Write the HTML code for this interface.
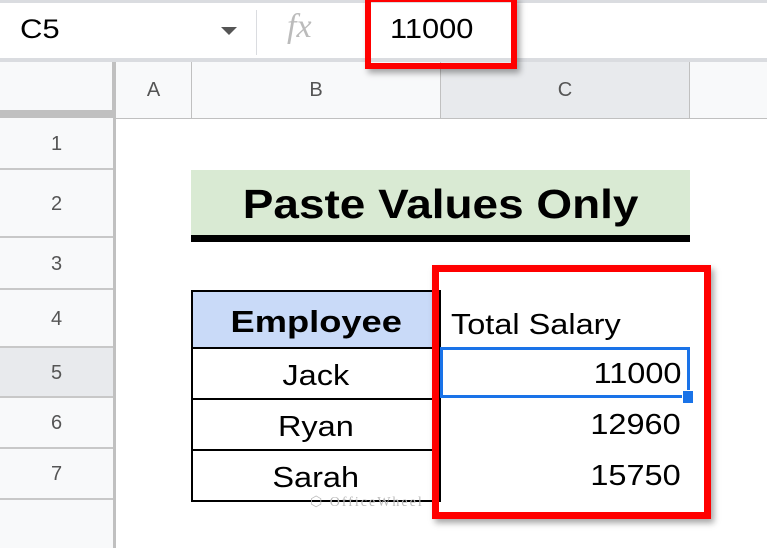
<!DOCTYPE html>
<html><head><style>
body{margin:0;width:767px;height:548px;overflow:hidden;background:#fff;font-family:"Liberation Sans",Arial,sans-serif;position:relative}
.a{position:absolute;box-sizing:border-box}
.s{display:inline-block;transform:scaleX(1.15)}
.rh{position:absolute;left:0;width:113px;background:#f8f9fa;border-bottom:2px solid #c8c8c8;color:#555;font-size:20px;text-align:center;box-sizing:border-box}
.ch{position:absolute;top:62px;height:57px;background:#f8f9fa;border-right:1px solid #c0c0c0;color:#555;font-size:20px;text-align:center;line-height:57px;border-bottom:1px solid #c0c0c0;box-sizing:border-box}
.td{position:absolute;left:191px;width:250px;border:2px solid #000;border-top:none;font-size:29px;text-align:center;box-sizing:border-box}
.num{position:absolute;right:86px;font-size:29px;color:#000;transform:scaleX(1.12);transform-origin:right}
</style></head><body>
<div class="a" style="left:0;top:0;width:767px;height:3px;background:#dadce0"></div>
<div class="a" style="left:20px;top:14px;font-size:27px;color:#000"><span class="s" style="transform-origin:left">C5</span></div>
<div class="a" style="left:221px;top:27px;width:0;height:0;border-left:8px solid transparent;border-right:8px solid transparent;border-top:8px solid #555"></div>
<div class="a" style="left:256px;top:10px;width:1px;height:45px;background:#dadce0"></div>
<div class="a" style="left:287px;top:8px;font-family:'Liberation Serif',serif;font-style:italic;font-size:34px;color:#bbb">fx</div>
<div class="a" style="left:390px;top:13px;font-size:28px;color:#000"><span class="s" style="transform-origin:left;transform:scaleX(1.1)">11000</span></div>
<div class="a" style="left:0;top:58px;width:767px;height:4px;background:#dadce0"></div>
<div class="a" style="left:0;top:62px;width:113px;height:57px;background:#f8f9fa;border-right:1px solid #c0c0c0"></div>
<div class="a" style="left:0;top:110px;width:113px;height:8px;background:#c0c0c0"></div>
<div class="a" style="left:113px;top:62px;width:3px;height:486px;background:#c0c0c0"></div>
<div class="ch" style="left:116px;width:76px">A</div>
<div class="ch" style="left:192px;width:249px">B</div>
<div class="ch" style="left:441px;width:249px;background:#e8eaed">C</div>
<div class="ch" style="left:690px;width:77px;border-right:none"></div>
<div class="rh" style="top:118px;height:52px;line-height:52px">1</div>
<div class="rh" style="top:170px;height:68px;line-height:68px">2</div>
<div class="rh" style="top:238px;height:52px;line-height:52px">3</div>
<div class="rh" style="top:290px;height:58px;line-height:58px">4</div>
<div class="rh" style="top:348px;height:50px;line-height:50px;background:#e8eaed">5</div>
<div class="rh" style="top:398px;height:51px;line-height:51px">6</div>
<div class="rh" style="top:449px;height:51px;line-height:51px">7</div>
<div class="rh" style="top:500px;height:48px;border-bottom:none"></div>
<div class="a" style="left:191px;top:170px;width:499px;height:65px;background:#d9ead3;font-weight:bold;font-size:41px;text-align:center;line-height:68px"><span class="s" style="transform:scaleX(1.12)">Paste Values Only</span></div>
<div class="a" style="left:191px;top:235px;width:499px;height:7px;background:#000"></div>
<div class="td" style="top:290px;height:59px;border-top:2px solid #000;background:#c9daf8;font-weight:bold;font-size:31px;line-height:60px"><span class="s" style="transform:scaleX(1.17)">Employee</span></div>
<div class="td" style="top:349px;height:51px;line-height:54px"><span class="s" style="transform:scaleX(1.12)">Jack</span></div>
<div class="td" style="top:400px;height:51px;line-height:54px"><span class="s" style="transform:scaleX(1.12)">Ryan</span></div>
<div class="td" style="top:451px;height:51px;line-height:54px"><span class="s" style="transform:scaleX(1.12)">Sarah</span></div>
<div class="a" style="left:451px;top:309px;font-size:29px"><span class="s" style="transform-origin:left;transform:scaleX(1.12)">Total Salary</span></div>
<div class="a" style="left:440px;top:347px;width:250px;height:51px;border:3px solid #1a73e8"></div>
<div class="a" style="left:682px;top:390px;width:12px;height:14px;background:#1a73e8;border:1px solid #fff"></div>
<div class="num" style="top:358px">11000</div>
<div class="num" style="top:409px">12960</div>
<div class="num" style="top:460px">15750</div>
<div class="a" style="left:310px;top:494px;font-family:'Liberation Serif',serif;font-size:14px;letter-spacing:2px;color:#bbb">⬡ OfficeWheel</div>
<div class="a" style="left:365px;top:-4px;width:152px;height:73px;border:6px solid #f00;box-shadow:3px 4px 6px rgba(0,0,0,.35)"></div>
<div class="a" style="left:432px;top:265px;width:279px;height:254px;border:7px solid #f00;box-shadow:3px 4px 6px rgba(0,0,0,.35)"></div>
</body></html>
